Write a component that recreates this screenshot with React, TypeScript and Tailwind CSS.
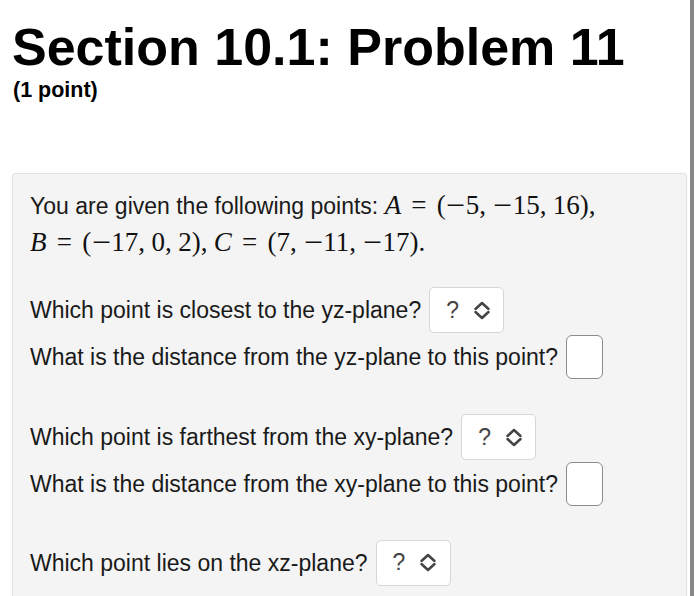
import React from 'react';

// Math bits rendered with a serif face, spaced roughly like TeX output.
const M: React.FC<{ children: React.ReactNode }> = ({ children }) => (
  <span className="font-['Liberation_Serif','Times_New_Roman',serif] text-[27px] text-[#111]">{children}</span>
);
const Eq = () => <span className="mx-[0.3em] inline-block w-[0.72em] text-center">=</span>;
const Neg = () => <span className="mx-[0.09em] inline-block scale-x-125">−</span>;
const Cm = () => <span className="mr-[0.24em]">,</span>;

const Select = () => (
  <span className="ml-[8px] inline-flex h-[46px] w-[75px] shrink-0 items-center rounded-[5px] border border-[#d6d6d6] bg-white pl-[16px]">
    <span className="text-[23px] leading-none text-[#444]">?</span>
    <svg className="ml-[14px]" width="18" height="19" viewBox="0 0 18 19" fill="none" stroke="#444" strokeWidth="2.5" strokeLinecap="round" strokeLinejoin="round">
      <path d="M2.5 8 9 2 15.5 8" />
      <path d="M2.5 11 9 17 15.5 11" />
    </svg>
  </span>
);

const Blank = () => (
  <span className="ml-[8px] inline-block h-[44px] w-[37px] shrink-0 rounded-[6px] border-[1.5px] border-[#8c8c8c] bg-white" />
);

const Row: React.FC<{ children: React.ReactNode; className?: string }> = ({ children, className = '' }) => (
  <div className={`flex h-[47px] items-center ${className}`}>{children}</div>
);

export default function App() {
  return (
    <div className="flex h-[596px] overflow-hidden bg-white font-['Liberation_Sans',Arial,sans-serif] text-[#1a1a1a]">
      <div className="w-[690px] overflow-hidden">
        <h1 className="pl-[12px] pt-[21px] text-[52px] font-bold leading-[52px] text-black">Section 10.1: Problem 11</h1>
        <div className="mt-[6px] pl-[13px] text-[21.5px] font-bold leading-[22px] text-black">(1 point)</div>

        <div className="ml-[12px] mt-[72px] h-[460px] w-[675px] rounded-[4px] border border-[#e2e2e2] bg-[#f4f4f4] pl-[17px] pt-[13px] shadow-[0_0_2px_rgba(0,0,0,0.06)]">
          <p className="text-[23px] leading-[36px]">
            You are given the following points:{' '}
            <M>
              <i>A</i><Eq />(<Neg />5<Cm /><Neg />15<Cm />16),
            </M>
            <br />
            <M>
              <i>B</i><Eq />(<Neg />17<Cm />0<Cm />2)<Cm /><i>C</i><Eq />(7<Cm /><Neg />11<Cm /><Neg />17).
            </M>
          </p>

          <div className="text-[23px] leading-[26px]">
            <Row className="mt-[25.5px]">
              <span>Which point is closest to the yz-plane?</span>
              <Select />
            </Row>
            <Row>
              <span>What is the distance from the yz-plane to this point?</span>
              <Blank />
            </Row>

            <Row className="mt-[33px]">
              <span>Which point is farthest from the xy-plane?</span>
              <Select />
            </Row>
            <Row>
              <span>What is the distance from the xy-plane to this point?</span>
              <Blank />
            </Row>

            <Row className="mt-[31.5px]">
              <span>Which point lies on the xz-plane?</span>
              <Select />
            </Row>
          </div>
        </div>
      </div>
      <div className="w-[4px] bg-[#888]" />
      <div className="flex-1 bg-white" />
    </div>
  );
}
